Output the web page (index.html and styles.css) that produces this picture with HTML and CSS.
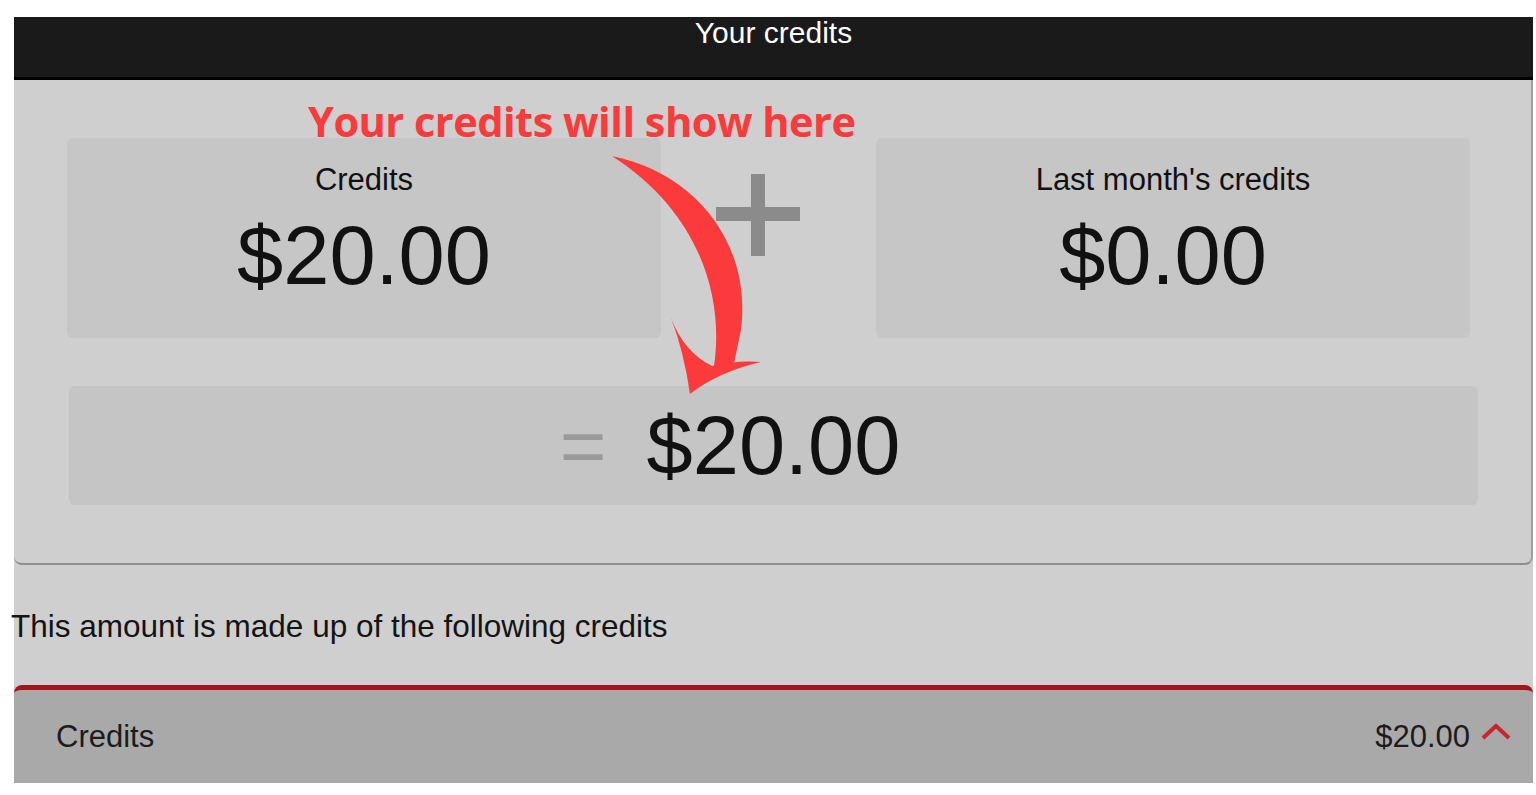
FILE: index.html
```html
<!DOCTYPE html>
<html lang="en">
<head>
    <meta charset="UTF-8">
    <meta name="viewport" content="width=device-width, initial-scale=1.0">
    <title>Your credits</title>
    <link rel="stylesheet" href="styles.css">
</head>
<body>
    <div class="page">
        <div class="header">Your credits</div>

        <div class="summary">
            <div class="cards">
                <div class="card">
                    <div class="card-label">Credits</div>
                    <div class="card-amount">$20.00</div>
                </div>
                <div class="plus">
                    <svg width="84" height="82" viewBox="0 0 84 82">
                        <rect x="0" y="33" width="84" height="14" fill="#8b8b8b"/>
                        <rect x="35" y="0" width="14" height="82" fill="#8b8b8b"/>
                    </svg>
                </div>
                <div class="card">
                    <div class="card-label">Last month's credits</div>
                    <div class="card-amount shifted">$0.00</div>
                </div>
            </div>
            <div class="total">
                <span class="equals">=</span>
                <span class="total-amount">$20.00</span>
                <span></span>
            </div>
        </div>

        <p class="note">This amount is made up of the following credits</p>

        <div class="accordion">
            <span class="acc-title">Credits</span>
            <span class="acc-right">
                $20.00
                <svg class="chevron" width="32" height="20" viewBox="0 0 32 20">
                    <path d="M3 17 L16 5 L29 17" fill="none" stroke="#c8262b" stroke-width="4"/>
                </svg>
            </span>
        </div>

        <!-- annotation on top of the screenshot -->
        <div class="callout">Your credits will show here</div>
        <svg class="arrow" width="1536" height="795" viewBox="0 0 1536 795">
            <path d="M612 156 C692 172 752 240 741 330 L733 368 L714 366 C724 300 702 214 612 156 Z" fill="#fb3a3c"/>
            <path d="M671 318 Q684 352 712 366 Q736 360 761 362 Q718 372 690 394 Q684 352 671 318 Z" fill="#fb3a3c"/>
        </svg>
    </div>
</body>
</html>
```

FILE: styles.css
```css
body {
    margin: 0;
    background: #fff;
    font-family: "Liberation Sans", Arial, sans-serif;
}

.page {
    position: relative;
    margin: 17px 3px 0 14px;
    height: 766px;
    background: #cfcfcf;
}

.header {
    height: 63px;
    box-sizing: border-box;
    padding-top: 1px;
    background: #1a1a1a;
    border-bottom: 3px solid #000;
    color: #fff;
    font-size: 30px;
    line-height: 30px;
    text-align: center;
}

.summary {
    padding: 58px 61px 58px 53px;
    border-bottom: 2px solid #8e8e8e;
    border-right: 2px solid #a0a0a0;
    border-radius: 0 0 8px 8px;
}

.cards {
    display: grid;
    grid-template-columns: 594px 1fr 594px;
}

.card {
    height: 200px;
    box-sizing: border-box;
    padding-top: 26px;
    background: #c6c6c6;
    border-radius: 6px;
    text-align: center;
    color: #111;
}

.card-label {
    font-size: 31px;
    line-height: 31px;
}

.card-amount {
    margin-top: 19px;
    font-size: 83px;
    line-height: 83px;
}

.card-amount.shifted {
    padding-right: 20px;
}

.plus {
    display: flex;
    justify-content: center;
    padding: 36px 22px 0 0;
}

.total {
    margin: 48px -8px 0 2px;
    height: 119px;
    display: grid;
    grid-template-columns: 1fr auto 1fr;
    align-items: center;
    background: #c5c5c5;
    border-radius: 6px;
}

.equals {
    justify-self: end;
    margin-right: 40px;
    color: #9a9a9a;
    font-size: 80px;
    line-height: 83px;
}

.total-amount {
    color: #111;
    font-size: 83px;
    line-height: 83px;
}

.note {
    margin: 43px 0 0 -3px;
    font-size: 31.5px;
    line-height: 36px;
    color: #141414;
}

.accordion {
    position: absolute;
    left: 0;
    right: 0;
    bottom: 0;
    height: 93px;
    display: flex;
    align-items: center;
    justify-content: space-between;
    padding: 0 21px 0 42px;
    background: #a9a9a9;
    border-top: 5px solid #a3171c;
    border-radius: 8px 8px 0 0;
    font-size: 31px;
    color: #1c1c1c;
}

.acc-right {
    display: flex;
    align-items: center;
    gap: 10px;
}

.chevron {
    margin-top: -12px;
}

.callout {
    position: absolute;
    left: 294px;
    top: 79px;
    font-family: "Open Sans", sans-serif;
    font-weight: 700;
    font-size: 41.5px;
    line-height: 50px;
    color: #fb3a3c;
    letter-spacing: -0.5px;
}

.arrow {
    position: absolute;
    left: -14px;
    top: -17px;
    pointer-events: none;
}
```
